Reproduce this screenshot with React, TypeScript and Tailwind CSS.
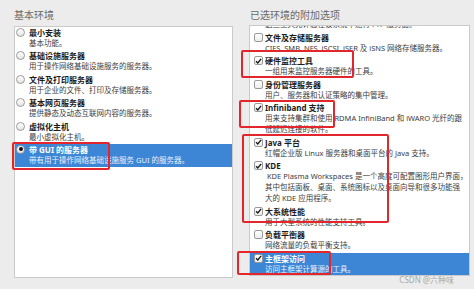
import React from 'react';

type Env = { title: string; desc: string; selected?: boolean };
type Addon = { title: string; lines: string[]; checked?: boolean; selected?: boolean };

const envs: Env[] = [
  { title: '最小安装', desc: '基本功能。' },
  { title: '基础设施服务器', desc: '用于操作网络基础设施服务的服务器。' },
  { title: '文件及打印服务器', desc: '用于企业的文件、打印及存储服务器。' },
  { title: '基本网页服务器', desc: '提供静态及动态互联网内容的服务器。' },
  { title: '虚拟化主机', desc: '最小虚拟化主机。' },
  { title: '带 GUI 的服务器', desc: '带有用于操作网络基础设施服务 GUI 的服务器。', selected: true },
];

const addons: Addon[] = [
  { title: '文件及存储服务器', lines: ['CIFS, SMB, NFS, iSCSI, iSER 及 iSNS 网络存储服务器。'] },
  { title: '硬件监控工具', lines: ['一组用来监控服务器硬件的工具。'], checked: true },
  { title: '身份管理服务器', lines: ['用户、服务器和认证策略的集中管理。'] },
  {
    title: 'Infiniband 支持',
    lines: ['用来支持集群和使用 RDMA InfiniBand 和 iWARO 光纤的跟', '低延迟连接的软件。'],
    checked: true,
  },
  { title: 'Java 平台', lines: ['红帽企业版 Linux 服务器和桌面平台的 Java 支持。'], checked: true },
  {
    title: 'KDE',
    lines: [
      '\u00a0KDE Plasma Workspaces 是一个高度可配置图形用户界面，',
      '其中包括面板、桌面、系统图标以及桌面向导和很多功能强',
      '大的 KDE 应用程序。',
    ],
    checked: true,
  },
  { title: '大系统性能', lines: ['用于大型系统的性能支持工具。'], checked: true },
  { title: '负载平衡器', lines: ['网络流量的负载平衡支持。'] },
  { title: '主框架访问', lines: ['访问主框架计算源的工具。'], checked: true, selected: true },
];

const Radio = ({ on }: { on?: boolean }) => (
  <div className="w-[9px] h-[9px] rounded-full border border-[#9a9a9a] bg-gradient-to-b from-white to-[#e4e4e4] flex items-center justify-center shrink-0 mt-[1px]">
    {on && <div className="w-[4px] h-[4px] rounded-full bg-[#111]" />}
  </div>
);

const Check = ({ on }: { on?: boolean }) => (
  <div className="w-[9px] h-[9px] rounded-[2px] border border-[#9a9a9a] bg-gradient-to-b from-white to-[#ececec] flex items-center justify-center shrink-0 mt-[1px]">
    {on && (
      <svg width="8" height="8" viewBox="0 0 8 8">
        <path d="M1.2 4.2 L3.2 6.2 L7 1.6" fill="none" stroke="#1b1b1b" strokeWidth="1.6" />
      </svg>
    )}
  </div>
);

export default function App() {
  return (
    <div className="relative w-[474px] h-[289px] overflow-hidden bg-[#ececec] font-['Noto_Sans','Noto_Sans_CJK_SC',sans-serif]">
      <div className="flex h-full">
        {/* 基本环境 */}
        <div className="ml-[14px] w-[219px] flex flex-col">
          <div className="h-[26px] pt-[9px] text-[10px] leading-[12px] text-[#6a6a6a]">基本环境</div>
          <div className="h-[252px] bg-white border border-[#cacaca] overflow-hidden">
            {envs.map((e) => (
              <div
                key={e.title}
                className={`h-[23.4px] flex gap-[4px] pl-[1px] ${e.selected ? 'bg-[#3d86d6]' : ''}`}
              >
                <Radio on={e.selected} />
                <div className="flex flex-col whitespace-nowrap">
                  <span className={`text-[8px] leading-[11px] font-bold ${e.selected ? 'text-white' : 'text-[#1c1c1c]'}`}>
                    {e.title}
                  </span>
                  <span className={`text-[7.5px] leading-[11px] ${e.selected ? 'text-[#e8f1fc]' : 'text-[#3c3c3c]'}`}>
                    {e.desc}
                  </span>
                </div>
              </div>
            ))}
          </div>
        </div>

        {/* 已选环境的附加选项 */}
        <div className="ml-[16px] w-[221px] flex flex-col">
          <div className="h-[25px] pt-[9px] pl-[1px] text-[10px] leading-[12px] text-[#6a6a6a]">已选环境的附加选项</div>
          <div className="h-[251px] bg-white border border-[#cacaca] overflow-hidden">
            {/* previous item's description, scrolled mostly out of view */}
            <div className="h-[5.5px] overflow-hidden pl-[15px]">
              <div className="-mt-[7px] text-[7.5px] leading-[11px] text-[#3c3c3c] whitespace-nowrap">
                这些工具允许您在该系统中运行 FTP 服务器。
              </div>
            </div>
            {addons.map((a) => (
              <div
                key={a.title}
                className={`flex gap-[2px] pl-[4px] pb-[1.5px] ${a.selected ? 'bg-[#3d86d6]' : ''}`}
              >
                <Check on={a.checked} />
                <div className="flex flex-col whitespace-nowrap">
                  <span className={`text-[8px] leading-[11px] font-bold ${a.selected ? 'text-white' : 'text-[#1c1c1c]'}`}>
                    {a.title}
                  </span>
                  {a.lines.map((l) => (
                    <span
                      key={l}
                      className={`text-[7.5px] leading-[11px] ${a.selected ? 'text-[#e8f1fc]' : 'text-[#3c3c3c]'}`}
                    >
                      {l}
                    </span>
                  ))}
                </div>
              </div>
            ))}
            <div className="pl-[4px] pt-[1px]">
              <div className="w-[9px] h-[9px] rounded-[2px] border border-[#9a9a9a] bg-white" />
            </div>
          </div>
        </div>
      </div>

      {/* red annotation boxes */}
      <div className="absolute left-[12px] top-[142px] w-[98px] h-[28px] border-2 border-[#e3262b] rounded-[2px]" />
      <div className="absolute left-[241px] top-[50px] w-[113px] h-[28px] border-2 border-[#e3262b] rounded-[2px]" />
      <div className="absolute left-[239px] top-[100px] w-[96px] h-[28px] border-2 border-[#e3262b] rounded-[2px]" />
      <div className="absolute left-[242px] top-[134px] w-[147px] h-[89px] border-2 border-[#e3262b] rounded-[2px]" />
      <div className="absolute left-[237px] top-[251px] w-[94px] h-[24px] border-2 border-[#e3262b] rounded-[2px]" />

      <div className="absolute right-[20px] bottom-[4px] text-[8px] leading-[10px] text-[#a9a9a9]">CSDN @六种味</div>
    </div>
  );
}
